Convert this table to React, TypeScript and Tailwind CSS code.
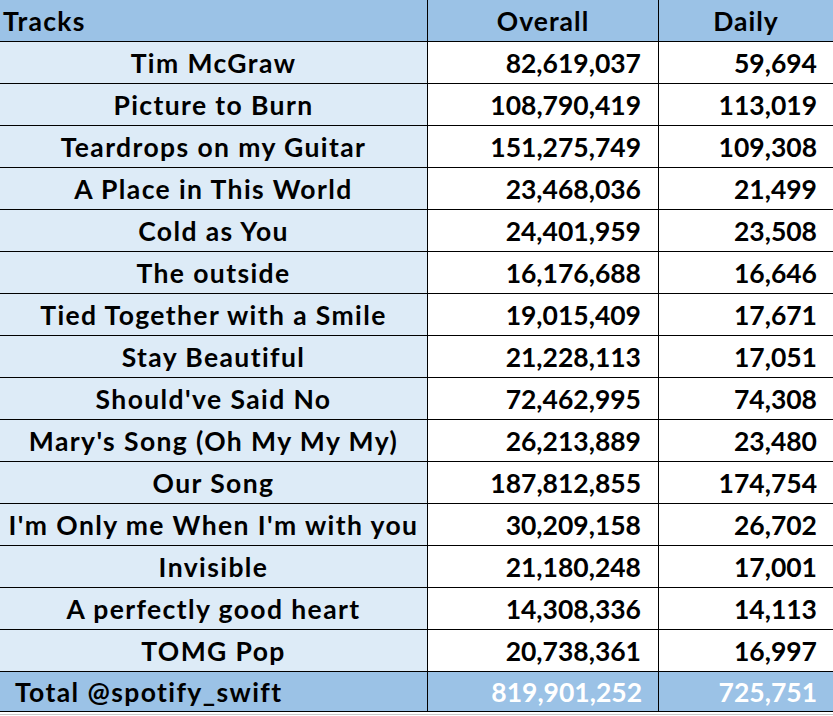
import React from "react";

const rows: [string, string, string][] = [
  ["Tim McGraw", "82,619,037", "59,694"],
  ["Picture to Burn", "108,790,419", "113,019"],
  ["Teardrops on my Guitar", "151,275,749", "109,308"],
  ["A Place in This World", "23,468,036", "21,499"],
  ["Cold as You", "24,401,959", "23,508"],
  ["The outside", "16,176,688", "16,646"],
  ["Tied Together with a Smile", "19,015,409", "17,671"],
  ["Stay Beautiful", "21,228,113", "17,051"],
  ["Should've Said No", "72,462,995", "74,308"],
  ["Mary's Song (Oh My My My)", "26,213,889", "23,480"],
  ["Our Song", "187,812,855", "174,754"],
  ["I'm Only me When I'm with you", "30,209,158", "26,702"],
  ["Invisible", "21,180,248", "17,001"],
  ["A perfectly good heart", "14,308,336", "14,113"],
  ["TOMG Pop", "20,738,361", "16,997"],
];

export default function App() {
  return (
    <div
      className="w-[833px] h-[716px] bg-white text-black font-bold text-[26.5px] leading-none overflow-hidden"
      style={{ fontFamily: "Lato, 'Liberation Sans', sans-serif" }}
    >
      <div className="grid grid-cols-[428px_231px_174px]">
        <div className="h-[42px] bg-[#9bc2e6] border-b border-r border-black flex items-center pl-[3px] pt-[1px] tracking-[1.3px]">Tracks</div>
        <div className="h-[42px] bg-[#9bc2e6] border-b border-r border-black flex items-center justify-center pt-[1px] tracking-[1px]">Overall</div>
        <div className="h-[42px] bg-[#9bc2e6] border-b border-black flex items-center justify-center pt-[1px] tracking-[1px]">Daily</div>
        {rows.map(([name, overall, daily]) => (
          <React.Fragment key={name}>
            <div className="h-[42px] bg-[#ddebf7] border-b border-r border-black flex items-center justify-center pt-[2px] tracking-[1.4px] whitespace-nowrap">{name}</div>
            <div className="h-[42px] bg-white border-b border-r border-black flex items-center justify-end pr-[17px] pt-[2px]">{overall}</div>
            <div className="h-[42px] bg-white border-b border-black flex items-center justify-end pr-[16px] pt-[2px]">{daily}</div>
          </React.Fragment>
        ))}
        <div className="h-[40px] bg-[#9bc2e6] border-b border-r border-black flex items-center pl-[15px] pt-[2px] tracking-[1.4px]">Total @spotify_swift</div>
        <div className="h-[40px] bg-[#9bc2e6] border-b border-r border-black flex items-center justify-end pr-[16px] pt-[2px] text-white">819,901,252</div>
        <div className="h-[40px] bg-[#9bc2e6] border-b border-black flex items-center justify-end pr-[16px] pt-[2px] text-white">725,751</div>
      </div>
      <div className="h-[2px] bg-white" />
      <div className="h-[1px] bg-[#c8c8c8]" />
    </div>
  );
}
